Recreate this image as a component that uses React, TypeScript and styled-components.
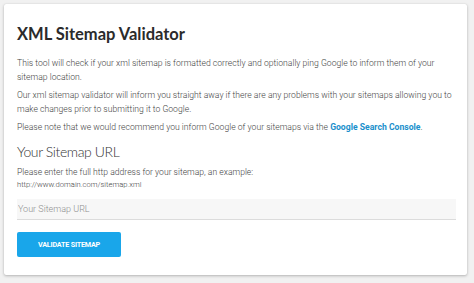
import styled, { createGlobalStyle } from 'styled-components';

const GlobalStyle = createGlobalStyle`
    html, body {
        margin: 0;
        padding: 0;
        background: #f1f1f1;
    }
    body {
        width: 474px;
        height: 283px;
        overflow: hidden;
    }
`;

const Page = styled.div`
    padding: 4px 7px 8px 4px;
`;

const Card = styled.section`
    background: #ffffff;
    height: 271px;
    box-sizing: border-box;
    padding: 18px 11px 0 13px;
    box-shadow: 0 1px 3px rgba(0, 0, 0, 0.25), 0 0 1px rgba(0, 0, 0, 0.15);
    border-radius: 2px;
`;

const Title = styled.h1`
    margin: 0 0 10px 0;
    font-family: Lato, 'Liberation Sans', sans-serif;
    font-weight: 700;
    font-size: 16.5px;
    line-height: 24px;
    color: #2b2b2b;
`;

const Paragraph = styled.p`
    margin: 0 0 4px 0;
    font-family: Roboto, 'Liberation Sans', sans-serif;
    font-weight: 300;
    font-size: 8.65px;
    line-height: 14px;
    color: #444;
`;

const Link = styled.a`
    color: #1a8fcc;
    font-weight: 700;
    text-decoration: none;
`;

const SectionHeading = styled.h2`
    margin: 9px 0 5px 0;
    font-family: Lato, 'Liberation Sans', sans-serif;
    font-weight: 300;
    font-size: 14px;
    letter-spacing: -0.4px;
    line-height: 18px;
    color: #333;
`;

const Hint = styled.p<{ small?: boolean }>`
    margin: ${props => (props.small ? '1px 0 0 0' : '0')};
    font-family: Roboto, 'Liberation Sans', sans-serif;
    font-weight: 300;
    font-size: ${props => (props.small ? '7.6px' : '8.6px')};
    line-height: ${props => (props.small ? '11px' : '12px')};
    color: #444;
`;

const Input = styled.input`
    display: block;
    margin-top: 9px;
    width: 100%;
    box-sizing: border-box;
    height: 21px;
    padding: 0 0 0 1px;
    border: 0;
    border-bottom: 1px solid #dcdcdc;
    background: #f7f7f7;
    font-family: Roboto, 'Liberation Sans', sans-serif;
    font-weight: 300;
    font-size: 9px;
    color: #333;
    outline: none;

    &::placeholder {
        color: #8f8f8f;
    }
`;

const Button = styled.button`
    margin-top: 12px;
    width: 104px;
    height: 25px;
    display: flex;
    align-items: center;
    justify-content: center;
    border: 0;
    border-radius: 2px;
    background: #19a6ea;
    color: #fff;
    font-family: Roboto, 'Liberation Sans', sans-serif;
    font-weight: 700;
    font-size: 7.2px;
    letter-spacing: -0.2px;
    text-transform: uppercase;
    cursor: pointer;
`;

export default function App() {
    return (
        <>
            <GlobalStyle />
            <Page>
                <Card>
                    <Title>XML Sitemap Validator</Title>
                    <Paragraph>
                        This tool will check if your xml sitemap is formatted correctly and optionally ping
                        Google to inform them of your sitemap location.
                    </Paragraph>
                    <Paragraph>
                        Our xml sitemap validator will inform you straight away if there are any problems
                        with your sitemaps allowing you to make changes prior to submitting it to Google.
                    </Paragraph>
                    <Paragraph>
                        Please note that we would recommend you inform Google of your sitemaps via the{' '}
                        <Link href="#">Google Search Console</Link>.
                    </Paragraph>
                    <SectionHeading>Your Sitemap URL</SectionHeading>
                    <Hint>Please enter the full http address for your sitemap, an example:</Hint>
                    <Hint small>http://www.domain.com/sitemap.xml</Hint>
                    <Input placeholder="Your Sitemap URL" />
                    <Button>Validate Sitemap</Button>
                </Card>
            </Page>
        </>
    );
}
